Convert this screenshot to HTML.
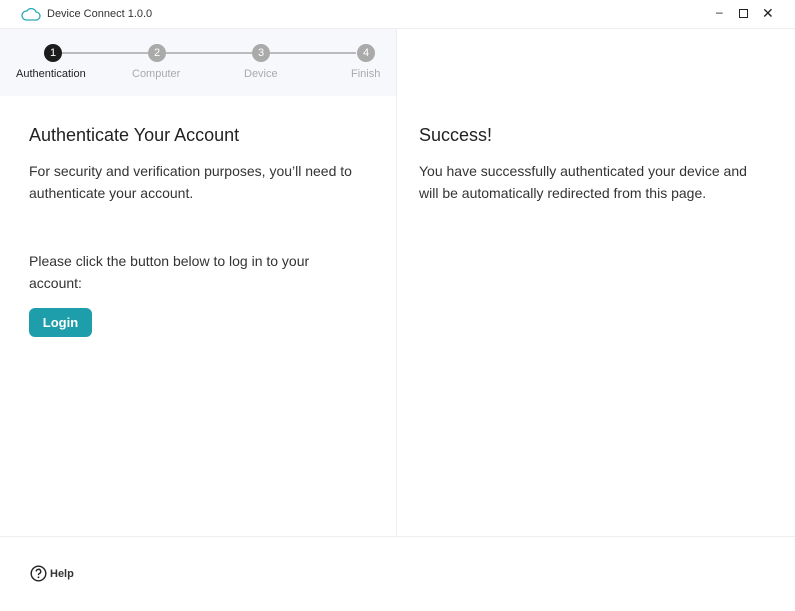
<!DOCTYPE html>
<html><head><style>
body{margin:0;width:795px;height:611px;background:#fff;font-family:"Liberation Sans",sans-serif;position:relative;overflow:hidden;color:#222}
.tb{position:absolute;top:0;left:0;width:795px;height:28px;border-bottom:1px solid #eee}
.tb .t{position:absolute;left:47px;top:8px;font-size:11px;color:#333}
.steps{position:absolute;top:29px;left:0;width:396px;height:67px;background:#f7f8fc}
.c{position:absolute;top:15px;width:18px;height:18px;border-radius:50%;background:#aaa;color:#fff;font-size:11px;text-align:center;line-height:18px}
.ln{position:absolute;top:23px;height:2px;background:#bbb}
.lb{position:absolute;top:39px;font-size:11px;color:#aaa}
h2{margin:0;font-size:18px;font-weight:normal;color:#222;position:absolute}
p{margin:0;font-size:14px;line-height:22px;color:#333;position:absolute}
.rp{position:absolute;left:396px;top:29px;width:398px;height:507px;border-left:1px solid #eee;border-right:1px solid #eee;border-bottom:1px solid #eee}
.foot{position:absolute;left:0;top:536px;width:795px;border-top:1px solid #eee}
</style></head><body>
<div class="tb">
<svg style="position:absolute;left:21px;top:8px" width="20" height="13" viewBox="0 0 20 13"><path d="M5 12H15a4 4 0 0 0 0-8 5 5 0 0 0-9-1A4.5 4.5 0 0 0 5 12z" fill="none" stroke="#2aa9b6" stroke-width="1.3"/></svg>
<span class="t">Device Connect 1.0.0</span>
<span style="position:absolute;left:716px;top:5px;font-size:12px">–</span>
<span style="position:absolute;left:739px;top:9px;width:7px;height:7px;border:1px solid #222"></span>
<span style="position:absolute;left:762px;top:5px;font-size:14px">✕</span>
</div>
<div class="steps">
<div class="ln" style="left:62px;width:86px"></div>
<div class="ln" style="left:166px;width:86px"></div>
<div class="ln" style="left:270px;width:86px"></div>
<div class="c" style="left:44px;background:#1c1c1c">1</div>
<div class="c" style="left:148px">2</div>
<div class="c" style="left:252px">3</div>
<div class="c" style="left:357px">4</div>
<div class="lb" style="left:16px;color:#222">Authentication</div>
<div class="lb" style="left:132px">Computer</div>
<div class="lb" style="left:244px">Device</div>
<div class="lb" style="left:351px">Finish</div>
</div>
<h2 style="left:29px;top:125px">Authenticate Your Account</h2>
<p style="left:29px;top:160px;width:360px">For security and verification purposes, you’ll need to authenticate your account.</p>
<p style="left:29px;top:250px;width:330px">Please click the button below to log in to your account:</p>
<div style="position:absolute;left:29px;top:308px;width:63px;height:29px;border-radius:6px;background:#1e9daa;color:#fff;font-size:13px;font-weight:bold;text-align:center;line-height:29px">Login</div>
<div class="rp"></div>
<h2 style="left:419px;top:125px">Success!</h2>
<p style="left:419px;top:160px;width:345px">You have successfully authenticated your device and will be automatically redirected from this page.</p>
<div class="foot"></div>
<svg style="position:absolute;left:30px;top:565px" width="17" height="17" viewBox="0 0 17 17"><circle cx="8.5" cy="8.5" r="7.3" fill="none" stroke="#222" stroke-width="1.4"/><path d="M6.3 6.5a2.2 2.2 0 1 1 3 2c-.7.3-.8.8-.8 1.6" fill="none" stroke="#222" stroke-width="1.4"/><circle cx="8.5" cy="12.3" r=".9" fill="#222"/></svg>
<span style="position:absolute;left:50px;top:568px;font-size:11px;color:#333;font-weight:bold">Help</span>
</body></html>
